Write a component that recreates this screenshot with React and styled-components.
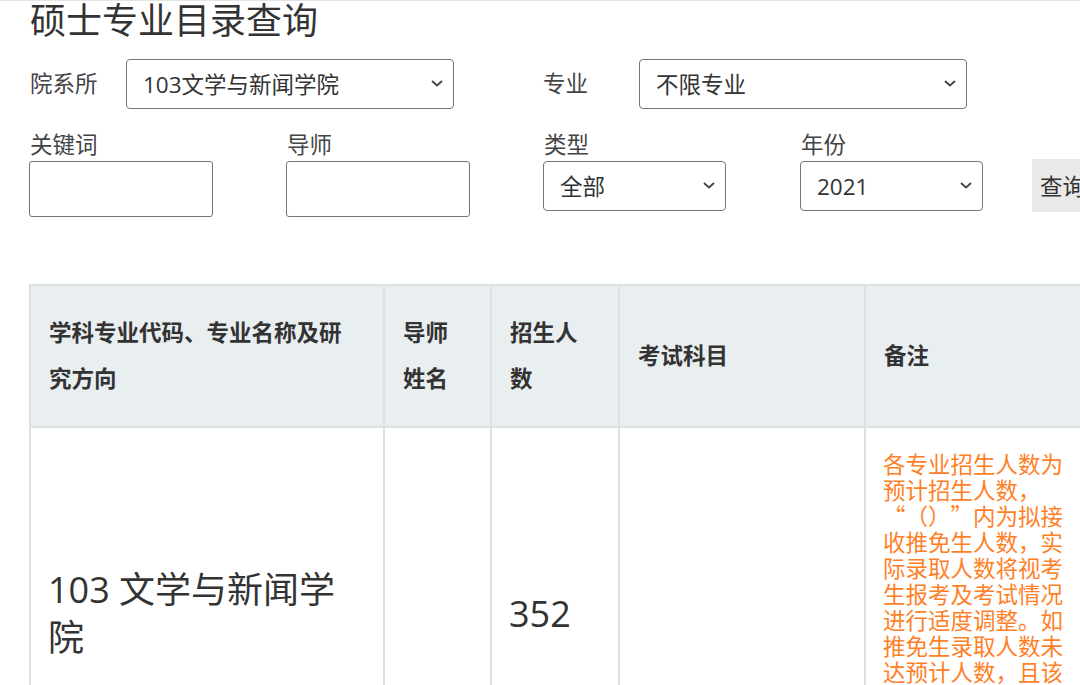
import styled, { createGlobalStyle } from "styled-components";

const GlobalStyle = createGlobalStyle`
  html, body {
    margin: 0;
    padding: 0;
    background: #fff;
    overflow: hidden;
  }
  body {
    font-family: "Open Sans", "Noto Sans CJK SC", sans-serif;
    color: #333;
  }
`;

const Page = styled.div`
  border-top: 1px solid #e4e4e4;
  padding: 0 0 0 29px;
  width: 1200px;
`;

const Title = styled.h1`
  margin: 0 0 18px 1px;
  font-size: 36px;
  line-height: 40px;
  font-weight: 400;
  color: #333;
`;

const Row = styled.div`
  display: flex;
  align-items: ${(p) => (p.$stack ? "flex-start" : "center")};
  margin-bottom: ${(p) => p.$gap || 0}px;
`;

const InlineGroup = styled.div`
  display: flex;
  align-items: center;
  width: 513px;
`;

const StackGroup = styled.div`
  display: flex;
  flex-direction: column;
  width: 257px;
`;

const Label = styled.label`
  font-size: 22.5px;
  line-height: 30px;
  color: #444;
  width: ${(p) => (p.$inline ? "96px" : "auto")};
  padding-left: 1px;
  margin-bottom: ${(p) => (p.$inline ? 0 : 1)}px;
`;

const SelectWrap = styled.div`
  position: relative;
  width: ${(p) => p.$w}px;
`;

const Select = styled.select`
  appearance: none;
  width: 100%;
  height: 50px;
  box-sizing: border-box;
  border: 1px solid #767676;
  border-radius: 4px;
  background: #fff;
  padding: 0 36px 0 16px;
  font-family: "Open Sans", "Noto Sans CJK SC", sans-serif;
  font-size: 22.5px;
  color: #333;
`;

const Chevron = styled.svg`
  position: absolute;
  right: 10px;
  top: 19px;
  width: 14px;
  height: 10px;
  pointer-events: none;
`;

const Input = styled.input`
  width: 184px;
  height: 56px;
  box-sizing: border-box;
  border: 1px solid #767676;
  border-radius: 3px;
  font-size: 22.5px;
`;

const Button = styled.button`
  margin: 29px 0 0 -25px;
  height: 53px;
  padding: 0 8px;
  border: none;
  background: #e9e9e9;
  font-family: "Open Sans", "Noto Sans CJK SC", sans-serif;
  font-size: 22.5px;
  color: #333;
  white-space: nowrap;
`;

const Table = styled.table`
  margin-top: 67px;
  border-collapse: collapse;
  table-layout: fixed;
  width: 1066px;
  border: 2px solid #e2e4e6;
`;

const Th = styled.th`
  background: #e9eef1;
  border: 2px solid #dee1e4;
  padding: 24px 20px 24px 18px;
  font-size: 22.5px;
  line-height: 46px;
  font-weight: 700;
  text-align: left;
  vertical-align: middle;
  color: #333;
`;

const Td = styled.td`
  border: 2px solid #dee1e4;
  padding: ${(p) => (p.$note ? "22px 20px 12px 17px" : "22px 20px 22px 17px")};
  vertical-align: ${(p) => (p.$note ? "top" : "middle")};
  font-family: ${(p) =>
    p.$note ? '"Noto Sans CJK SC", sans-serif' : '"Open Sans", "Noto Sans CJK SC", sans-serif'};
  font-size: ${(p) => (p.$note ? "22.5px" : "36px")};
  line-height: ${(p) => (p.$note ? "26px" : "48px")};
  color: ${(p) => (p.$note ? "#ff7f27" : "#333")};
  text-spacing-trim: space-all;
`;

const cols = [354, 107, 128, 246, 231];

function Dropdown({ w, value, label }) {
  return (
    <SelectWrap $w={w}>
      <Select defaultValue={value}>
        <option value={value}>{label}</option>
      </Select>
      <Chevron viewBox="0 0 14 10">
        <path d="M2 3 L7 7.5 L12 3" fill="none" stroke="#444" strokeWidth="1.8" />
      </Chevron>
    </SelectWrap>
  );
}

export default function App() {
  return (
    <>
      <GlobalStyle />
      <Page>
        <Title>硕士专业目录查询</Title>
        <Row $gap={21}>
          <InlineGroup>
            <Label $inline>院系所</Label>
            <Dropdown w={328} value="103" label="103文学与新闻学院" />
          </InlineGroup>
          <InlineGroup>
            <Label $inline>专业</Label>
            <Dropdown w={328} value="all" label="不限专业" />
          </InlineGroup>
        </Row>
        <Row $stack>
          <StackGroup>
            <Label>关键词</Label>
            <Input />
          </StackGroup>
          <StackGroup>
            <Label>导师</Label>
            <Input />
          </StackGroup>
          <StackGroup>
            <Label>类型</Label>
            <Dropdown w={183} value="all" label="全部" />
          </StackGroup>
          <StackGroup>
            <Label>年份</Label>
            <Dropdown w={183} value="2021" label="2021" />
          </StackGroup>
          <Button>查询</Button>
        </Row>
        <Table>
          <colgroup>
            {cols.map((w, i) => (
              <col key={i} style={{ width: w }} />
            ))}
          </colgroup>
          <thead>
            <tr>
              <Th>学科专业代码、专业名称及研究方向</Th>
              <Th>导师姓名</Th>
              <Th>招生人数</Th>
              <Th>考试科目</Th>
              <Th>备注</Th>
            </tr>
          </thead>
          <tbody>
            <tr>
              <Td>103 文学与新闻学院</Td>
              <Td></Td>
              <Td>352</Td>
              <Td></Td>
              <Td $note>
                各专业招生人数为预计招生人数，<wbr />“（）”内为拟接收推免生人数，实际录取人数将视考生报考及考试情况进行适度调整。如推免生录取人数未达预计人数，且该专业推免生录取人数未达到拟接收人数，剩余名额将用于统考招生。
              </Td>
            </tr>
          </tbody>
        </Table>
      </Page>
    </>
  );
}
